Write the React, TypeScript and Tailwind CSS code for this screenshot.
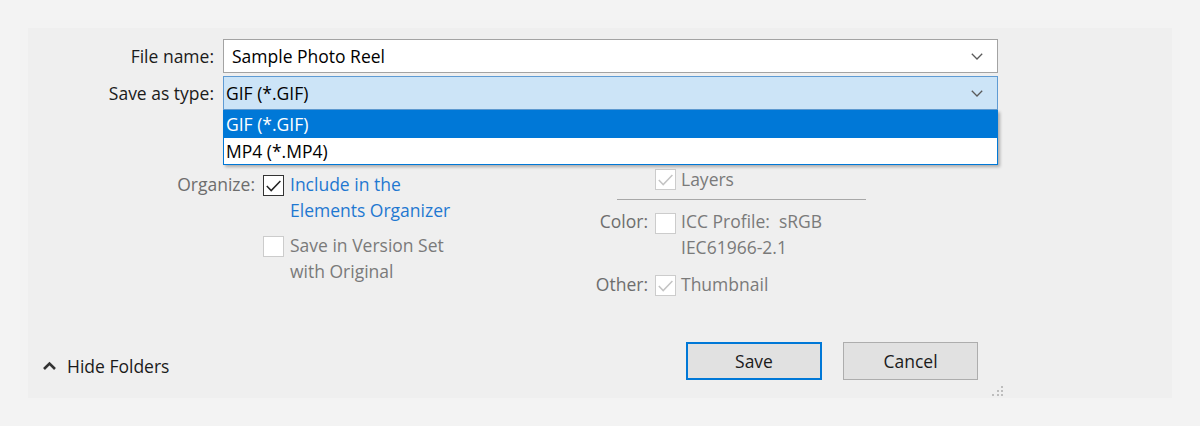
import React from "react";

function Chevron({ className = "" }: { className?: string }) {
  return (
    <svg width="12" height="7" viewBox="0 0 12 7" className={className}>
      <path d="M0.8 0.8 L6 6 L11.2 0.8" fill="none" stroke="#5a5a5a" strokeWidth="1.3" />
    </svg>
  );
}

function Checkbox({ checked = false, disabled = false, className = "" }: { checked?: boolean; disabled?: boolean; className?: string }) {
  const border = checked && !disabled ? "border-[#333333]" : "border-[#cccccc]";
  const stroke = disabled ? "#c4c4c4" : "#222222";
  return (
    <div className={`w-[21px] h-[21px] shrink-0 border bg-white flex items-center justify-center ${border} ${className}`}>
      {checked && (
        <svg width="17" height="14" viewBox="0 0 17 14">
          <path d="M1.8 7 L6.2 11.6 L15.4 2" fill="none" stroke={stroke} strokeWidth="1.5" />
        </svg>
      )}
    </div>
  );
}

export default function App() {
  return (
    <div className="min-h-screen bg-[#f3f3f3] p-[28px] font-['Open_Sans','Noto_Sans',sans-serif] text-[17.5px]">
      <div className="relative h-[370px] bg-[#efefef] flex flex-col pt-[11px]">
        {/* file name + type */}
        <div className="grid grid-cols-[186px_775px] gap-x-[9px] gap-y-[3px] items-center">
          <div className="text-right text-[#1b1b1b]">File name:</div>
          <div className="h-[34px] border border-[#a3a3a3] bg-white flex items-center pl-[8px] pr-[14px]">
            <span className="flex-1 text-black">Sample Photo Reel</span>
            <Chevron />
          </div>
          <div className="text-right text-[#1b1b1b]">Save as type:</div>
          <div className="relative">
            <div className="h-[34px] border border-[#5f9bd3] bg-[#cce4f7] flex items-center pl-[2px] pr-[14px]">
              <span className="flex-1 text-black">GIF (*.GIF)</span>
              <Chevron />
            </div>
            <div className="absolute left-0 top-full w-full z-10 border border-[#0078d7] border-t-0 bg-white shadow-[2px_2px_3px_rgba(0,0,0,0.28)]">
              <div className="h-[28px] bg-[#0078d7] text-white flex items-center pl-[2px]">GIF (*.GIF)</div>
              <div className="h-[26px] text-black flex items-center pl-[2px]">MP4 (*.MP4)</div>
            </div>
          </div>
        </div>

        {/* options */}
        <div className="flex items-start mt-[56px]">
          <div className="w-[532px] pt-[5px] flex flex-col gap-[9px]">
            <div className="grid grid-cols-[229px_21px_auto] gap-x-[6px] items-start leading-[26px]">
              <div className="text-right text-[#6d6d6d] pr-[2px]">Organize:</div>
              <Checkbox checked className="mt-[4px]" />
              <div className="text-[#1f78d1]">
                Include in the
                <br />
                Elements Organizer
              </div>
            </div>
            <div className="grid grid-cols-[229px_21px_auto] gap-x-[6px] items-start leading-[26px]">
              <div />
              <Checkbox className="mt-[4px]" />
              <div className="text-[#7a7a7a]">
                Save in Version Set
                <br />
                with Original
              </div>
            </div>
          </div>

          <div className="flex flex-col leading-[26px]">
            <div className="grid grid-cols-[90px_21px_auto] gap-x-[5px] items-start">
              <div />
              <Checkbox checked disabled className="mt-[3px]" />
              <div className="text-[#7a7a7a]">Layers</div>
            </div>
            <div className="ml-[57px] w-[249px] h-px bg-[#a8a8a8] mt-[7px]" />
            <div className="grid grid-cols-[90px_21px_auto] gap-x-[5px] items-start mt-[8px]">
              <div className="text-right text-[#6d6d6d] pr-[2px]">Color:</div>
              <Checkbox className="mt-[5px]" />
              <div className="text-[#7a7a7a]">
                ICC Profile:&nbsp; sRGB
                <br />
                IEC61966-2.1
              </div>
            </div>
            <div className="grid grid-cols-[90px_21px_auto] gap-x-[5px] items-start mt-[11px]">
              <div className="text-right text-[#6d6d6d] pr-[2px]">Other:</div>
              <Checkbox checked disabled className="mt-[4px]" />
              <div className="text-[#7a7a7a]">Thumbnail</div>
            </div>
          </div>
        </div>

        {/* footer */}
        <div className="mt-auto mb-[18px] flex items-start pl-[14px] pr-[194px]">
          <div className="flex items-center gap-[10px] mt-[11px] leading-[26px] text-[#1b1b1b]">
            <svg width="15" height="10" viewBox="0 0 15 10">
              <path d="M2 8 L7.5 2.5 L13 8" fill="none" stroke="#333333" strokeWidth="2.6" />
            </svg>
            Hide Folders
          </div>
          <div className="ml-auto flex gap-[21px]">
            <button className="w-[136px] h-[38px] border-2 border-[#0078d7] bg-[#e1e1e1] text-[#1b1b1b]">Save</button>
            <button className="w-[135px] h-[38px] border border-[#adadad] bg-[#e1e1e1] text-[#1b1b1b]">Cancel</button>
          </div>
        </div>

        {/* size grip */}
        <svg width="12" height="12" viewBox="0 0 12 12" className="absolute left-[964px] top-[358px]">
          <rect x="9" y="0" width="2" height="2" fill="#bdbdbd" />
          <rect x="5" y="4" width="2" height="2" fill="#bdbdbd" />
          <rect x="9" y="4" width="2" height="2" fill="#bdbdbd" />
          <rect x="0" y="8" width="2" height="2" fill="#bdbdbd" />
          <rect x="5" y="8" width="2" height="2" fill="#bdbdbd" />
          <rect x="9" y="8" width="2" height="2" fill="#bdbdbd" />
        </svg>
      </div>
    </div>
  );
}
